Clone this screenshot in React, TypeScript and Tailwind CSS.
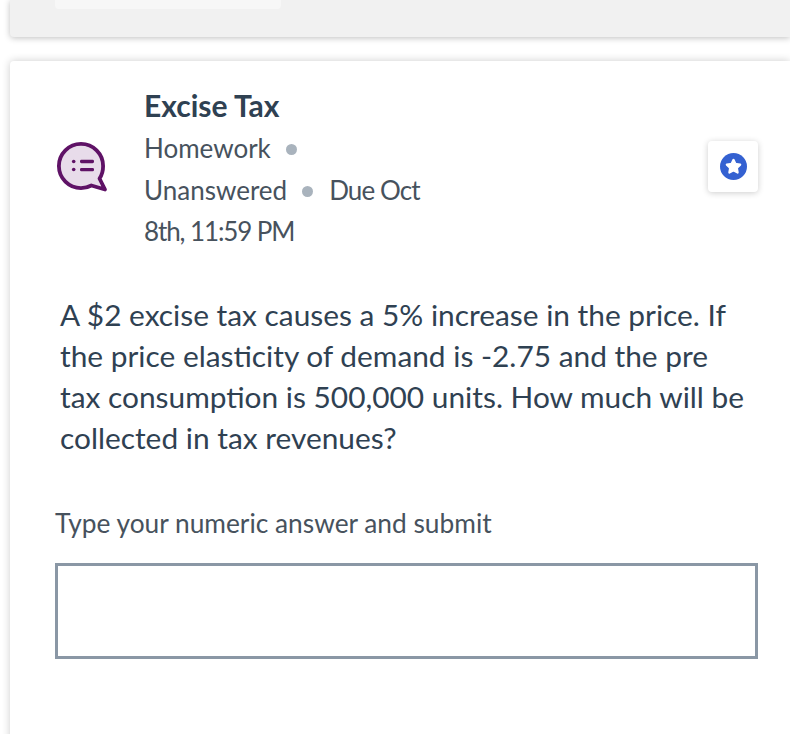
import { Star } from "lucide-react";

const font = "font-['Lato',sans-serif]";

function ChatIcon() {
  return (
    <svg width="54" height="54" viewBox="0 0 54 54" className="shrink-0 mb-[2px]">
      <path
        d="M26 3.9C13.8 3.9 3.9 13.8 3.9 26S13.8 48.1 26 48.1c3.8 0 7.3-.9 10.4-2.6L50 49.5 44.5 38.5C47 35 48.1 30.7 48.1 26 48.1 13.8 38.2 3.9 26 3.9Z"
        fill="#e8dcea"
        stroke="#5f1266"
        strokeWidth="3.8"
        strokeLinejoin="round"
      />
      <circle cx="18.7" cy="21.5" r="1.8" fill="#5f1266" />
      <circle cx="18.7" cy="29.5" r="1.8" fill="#5f1266" />
      <rect x="25" y="19.8" width="14" height="3.4" rx="1.4" fill="#5f1266" />
      <rect x="25" y="27.9" width="14" height="3.4" rx="1.4" fill="#5f1266" />
    </svg>
  );
}

export default function App() {
  return (
    <div className={`h-[734px] overflow-hidden bg-white ${font}`}>
      {/* Previous card */}
      <div className="h-[37px] ml-[10px] rounded-bl-sm bg-[#f1f1f1] shadow-[0_1px_6px_rgba(0,0,0,0.25)] pl-[45px]">
        <div className="w-[226px] h-[9px] rounded-b-sm bg-[#f7f7f7]" />
      </div>

      {/* Question card */}
      <div className="mt-[24px] ml-[10px] h-[700px] rounded-tl-sm bg-white shadow-[0_0_8px_rgba(0,0,0,0.2)] pt-[23px]">
        <div className="flex items-center pl-[45px] pr-[32px]">
          <ChatIcon />
          <div className="w-[300px] ml-[35px] text-[#47525d] text-[26px]">
            <div className="text-[#2f4152] text-[30px] leading-[43px] font-bold">Excise Tax</div>
            <div className="leading-[42px]">
              Homework
              <span className="inline-block w-[11px] h-[11px] rounded-full bg-[#a9b3bd] ml-[15px] align-[3px]" />
            </div>
            <div className="leading-[42px]">
              Unanswered
              <span className="inline-block w-[11px] h-[11px] rounded-full bg-[#a9b3bd] ml-[15px] mr-[16px] align-[3px]" />
              <span className="tracking-[-0.9px]">Due Oct</span>
            </div>
            <div className="leading-[41px] tracking-[-1.1px]">8th, 11:59 PM</div>
          </div>
          <button className="ml-auto w-[50px] h-[51px] mb-[3px] rounded bg-white shadow-[0_1px_6px_rgba(0,0,0,0.2)] flex items-center justify-center">
            <span className="w-[27px] h-[27px] rounded-full bg-[#3461d1] flex items-center justify-center">
              <Star size={17} fill="white" color="white" />
            </span>
          </button>
        </div>

        <p className="mt-[42px] pl-[50px] pr-[40px] text-[#2f4152] text-[29.85px] leading-[41px]">
          A $2 excise tax causes a 5% increase in the price. If the price elasticity of demand is -2.75 and the pre tax consumption is 500,000 units. How much will be collected in tax revenues?
        </p>

        <div className="mt-[45px] pl-[45px] text-[#47525d] text-[26.3px] leading-[41px]">Type your numeric answer and submit</div>

        <div className="mt-[19px] ml-[45px] mr-[32px] h-[96px] border-[3px] border-[#8a97a5] bg-white" />
      </div>
    </div>
  );
}
